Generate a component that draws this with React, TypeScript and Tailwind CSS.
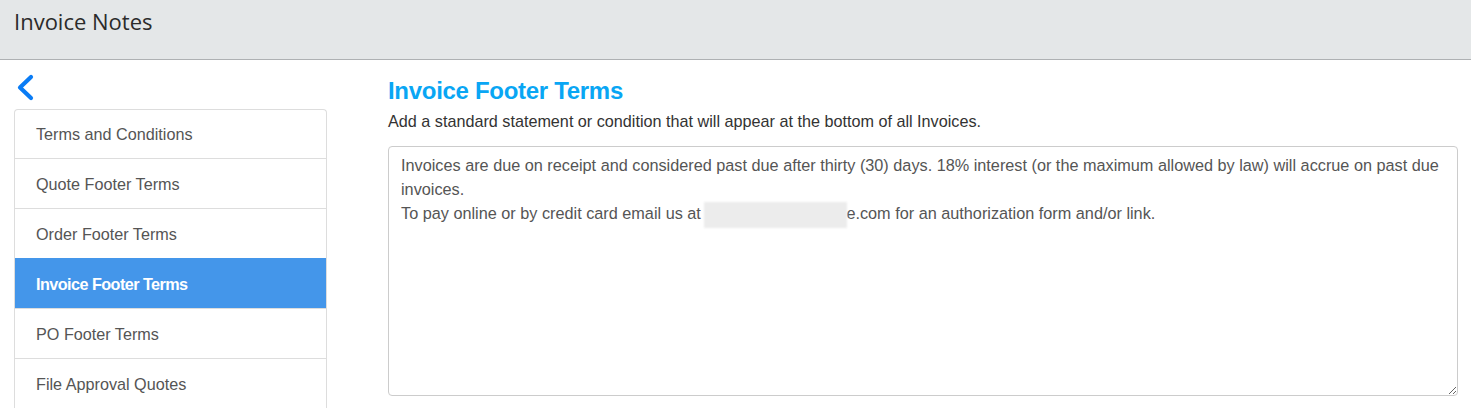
import React from "react";

const items = [
  "Terms and Conditions",
  "Quote Footer Terms",
  "Order Footer Terms",
  "Invoice Footer Terms",
  "PO Footer Terms",
  "File Approval Quotes",
];

export default function App() {
  return (
    <div className="w-[1471px] h-[409px] overflow-hidden bg-white" style={{ fontFamily: '"Liberation Sans", Arial, sans-serif' }}>
      <div className="h-[60px] bg-[#e4e7e8] border-b border-[#aeb1b3] px-[14px] pt-[6px]">
        <h1 className="text-[22px] leading-[30px] text-[#2b2b2b]" style={{ fontFamily: '"Open Sans", sans-serif' }}>
          Invoice Notes
        </h1>
      </div>
      <div className="flex">
        <div className="w-[313px] ml-[14px] pt-[13px] shrink-0">
          <svg width="22" height="30" viewBox="0 0 22 30" className="block ml-[1px]">
            <polyline points="16,4 5,14.5 16,25" fill="none" stroke="#0a7cf5" strokeWidth="4.2" strokeLinecap="round" strokeLinejoin="round" />
          </svg>
          <ul className="mt-[6px] border-x border-t border-[#dddddd] rounded-t-[4px]">
            {items.map((it, i) => {
              const active = it === "Invoice Footer Terms";
              return (
                <li
                  key={it}
                  className={
                    "flex items-center pl-[21px] text-[16.2px] pt-[1px] " +
                    (i > 0 ? "border-t h-[50px] " : "h-[48px] ") +
                    (active
                      ? "bg-[#4496ea] border-[#4496ea] text-white font-bold tracking-[-0.55px]"
                      : "border-[#dddddd] text-[#555555]")
                  }
                >
                  {it}
                </li>
              );
            })}
          </ul>
        </div>
        <div className="ml-[61px] w-[1070px] pt-[17px]">
          <h2 className="text-[24px] leading-[28px] font-bold text-[#09a6f4] tracking-[-0.3px]">Invoice Footer Terms</h2>
          <p className="mt-[6px] text-[16.2px] leading-[20px] text-[#333333]">
            Add a standard statement or condition that will appear at the bottom of all Invoices.
          </p>
          <div className="mt-[15px] h-[250px] border border-[#cccccc] rounded-[4px] px-3 pt-[6px] pb-[7px] text-[16.25px] leading-[24px] text-[#555555] resize overflow-auto">
            <div>
              Invoices are due on receipt and considered past due after thirty (30) days. 18% interest (or the maximum allowed by law) will accrue on past due invoices.
            </div>
            <div>
              To pay online or by credit card email us at{" "}
              <span className="inline-block align-middle w-[143px] h-[26px] bg-[#ececec] -mx-[1px] blur-[1px]" />
              e.com for an authorization form and/or link.
            </div>
          </div>
        </div>
      </div>
    </div>
  );
}
